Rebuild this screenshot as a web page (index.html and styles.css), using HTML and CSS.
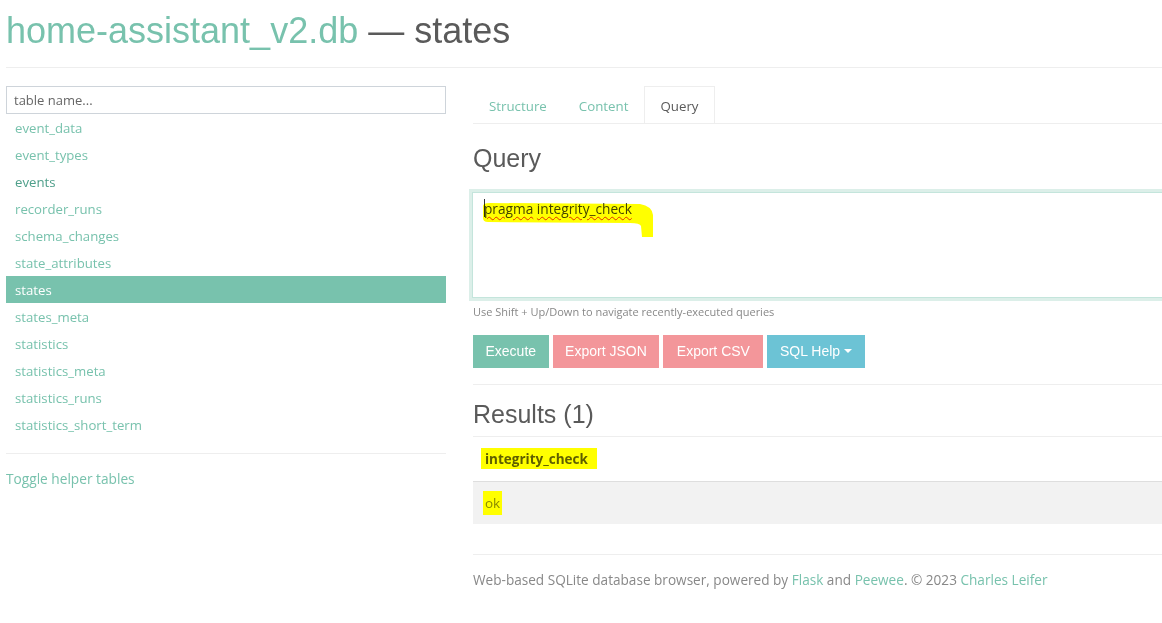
FILE: index.html
```html
<!DOCTYPE html>
<html lang="en">
<head>
    <meta charset="UTF-8">
    <title>home-assistant_v2.db — states</title>
    <link rel="stylesheet" href="styles.css">
</head>
<body>
    <div class="page">
        <h1 class="title"><a href="#">home-assistant_v2.db</a> — states</h1>
        <hr class="divider">
        <div class="layout">
            <aside class="sidebar">
                <input class="search" type="text" placeholder="table name...">
                <ul class="table-list">
                    <li><a href="#">event_data</a></li>
                    <li><a href="#">event_types</a></li>
                    <li class="hover"><a href="#">events</a></li>
                    <li><a href="#">recorder_runs</a></li>
                    <li><a href="#">schema_changes</a></li>
                    <li><a href="#">state_attributes</a></li>
                    <li class="active"><a href="#">states</a></li>
                    <li><a href="#">states_meta</a></li>
                    <li><a href="#">statistics</a></li>
                    <li><a href="#">statistics_meta</a></li>
                    <li><a href="#">statistics_runs</a></li>
                    <li><a href="#">statistics_short_term</a></li>
                </ul>
                <hr class="divider">
                <a class="toggle" href="#">Toggle helper tables</a>
            </aside>

            <main class="content">
                <ul class="tabs">
                    <li><a href="#">Structure</a></li>
                    <li><a href="#">Content</a></li>
                    <li class="active"><a href="#">Query</a></li>
                </ul>

                <h3 class="section-title">Query</h3>
                <div class="editor">
                    <span class="word">pragma</span> <span class="word">integrity_check</span>
                    <span class="caret"></span>
                    <svg class="marker-shape" width="200" height="60" viewBox="0 0 200 60">
                        <path d="M10,13 Q10,10 17,10 L167,11 Q179,13 180,22 L180,44 L169,44 L168,33 Q167,30 157,30 L15,29 Q10,29 10,25 Z" fill="#ffff00"/>
                    </svg>
                </div>
                <small class="help">Use Shift + Up/Down to navigate recently-executed queries</small>

                <div class="actions">
                    <button class="btn btn-primary">Execute</button>
                    <button class="btn btn-secondary">Export JSON</button>
                    <button class="btn btn-secondary wide">Export CSV</button>
                    <button class="btn btn-info">SQL Help<span class="dropdown-caret"></span></button>
                </div>

                <hr class="divider spaced">

                <h3 class="section-title results-title">Results (1)</h3>
                <table class="results">
                    <thead>
                        <tr><th><span class="marker marker-head">integrity_check</span></th></tr>
                    </thead>
                    <tbody>
                        <tr><td><span class="marker marker-cell">ok</span></td></tr>
                    </tbody>
                </table>

                <hr class="divider footer-rule">
                <footer class="footer">
                    Web-based SQLite database browser, powered by <a href="#">Flask</a> and <a href="#">Peewee</a>. &copy; 2023 <a href="#">Charles Leifer</a>
                </footer>
            </main>
        </div>
    </div>
</body>
</html>
```

FILE: styles.css
```css
html, body {
    overflow: hidden;
}
body {
    margin: 0;
    font-family: "Open Sans", "Noto Sans", sans-serif;
    font-size: 13.5px;
    color: #888;
    background: #fff;
}
a {
    color: #78c2ad;
    text-decoration: none;
}
.page {
    padding: 0 6px;
    width: 1600px;
}
.title {
    font-family: "Liberation Sans", Arial, sans-serif;
    font-weight: normal;
    font-size: 36px;
    line-height: 40px;
    margin: 11px 0 16px;
    color: #5a5a5a;
}
.divider {
    border: 0;
    border-top: 1px solid #eee;
    margin: 0;
}
.layout {
    display: flex;
    gap: 27px;
    margin-top: 18px;
}

/* Sidebar */
.sidebar {
    width: 440px;
    flex: none;
}
.search {
    display: block;
    width: 100%;
    height: 28px;
    box-sizing: border-box;
    border: 1px solid #ced4da;
    padding: 0 7px;
    font-family: "Open Sans", "Noto Sans", sans-serif;
    font-size: 13px;
    color: #666;
}
.search::placeholder {
    color: #666;
}
.table-list {
    list-style: none;
    margin: 0;
    padding: 0;
    font-size: 13.2px;
}
.table-list a {
    display: block;
    padding: 1px 9px 0;
    line-height: 26px;
}
.table-list .hover a {
    color: #4e9f8a;
}
.table-list .active a {
    background: #78c2ad;
    color: #fff;
}
.sidebar .divider {
    margin: 15px 0;
}
.toggle {
    display: block;
    line-height: 20px;
    font-size: 13.7px;
}

/* Main column */
.content {
    width: 1000px;
    flex: none;
}
.tabs {
    display: flex;
    list-style: none;
    margin: 0;
    padding: 0;
    border-bottom: 1px solid #eee;
    font-size: 13.3px;
}
.tabs a {
    display: block;
    padding: 9px 15px 7px;
    line-height: 20px;
    border: 1px solid transparent;
    border-bottom: 0;
}
.tabs .active a {
    color: #5a5a5a;
    border-color: #eee;
}
.section-title {
    font-family: "Liberation Sans", Arial, sans-serif;
    font-weight: normal;
    font-size: 25px;
    line-height: 30px;
    color: #5a5a5a;
    margin: 19px 0;
}
.editor {
    position: relative;
    height: 106px;
    box-sizing: border-box;
    border: 1px solid #c4e5dc;
    box-shadow: 0 0 0 3px #dcefe9;
    padding: 6px 11px;
    line-height: 20px;
    font-size: 13.7px;
    color: #444;
    margin-left: -1px;
}
.word {
    text-decoration: underline wavy #e03030;
    text-decoration-thickness: 1px;
    text-underline-offset: 2px;
}
.caret {
    position: absolute;
    left: 11px;
    top: 6px;
    width: 1px;
    height: 18px;
    background: #333;
}
.marker-shape {
    position: absolute;
    left: 0;
    top: 0;
    mix-blend-mode: multiply;
    pointer-events: none;
}
.help {
    display: block;
    font-size: 11px;
    line-height: 14px;
    margin-top: 7px;
}
.actions {
    display: flex;
    gap: 4px;
    margin-top: 16px;
}
.btn {
    font-family: "Liberation Sans", Arial, sans-serif;
    font-size: 14px;
    line-height: 21px;
    padding: 6px 12.5px;
    border: 0;
    border-radius: 0;
    color: #fff;
    cursor: pointer;
}
.btn.wide {
    padding: 6px 13.5px;
}
.btn-primary {
    background: #78c2ad;
}
.btn-secondary {
    background: #f3969a;
}
.btn-info {
    background: #6cc3d5;
}
.dropdown-caret {
    display: inline-block;
    margin-left: 4px;
    vertical-align: 3px;
    border-top: 4px solid #fff;
    border-left: 4px solid transparent;
    border-right: 4px solid transparent;
}
.divider.spaced {
    margin: 16px 0 14px;
}
.results-title {
    margin: 0 0 7px;
}
.results {
    width: 100%;
    border-collapse: collapse;
}
.results th {
    text-align: left;
    font-weight: bold;
    color: #5a5a5a;
    padding: 12px;
    line-height: 20px;
    border-top: 1px solid #eee;
    border-bottom: 1px solid #dedede;
}
.results td {
    padding: 11px 12px;
    line-height: 20px;
    background: #f2f2f2;
}
.marker {
    background: #ffff00;
}
.marker-head {
    color: #5e5e00;
    padding: 2px 9px 1px 4px;
    margin-left: -4px;
}
.marker-cell {
    color: #8a8a00;
    padding: 3px 2px;
    margin-left: -2px;
}
.footer-rule {
    margin-top: 30px;
}
.footer {
    margin-top: 15px;
    line-height: 20px;
    font-size: 13.6px;
}
```
